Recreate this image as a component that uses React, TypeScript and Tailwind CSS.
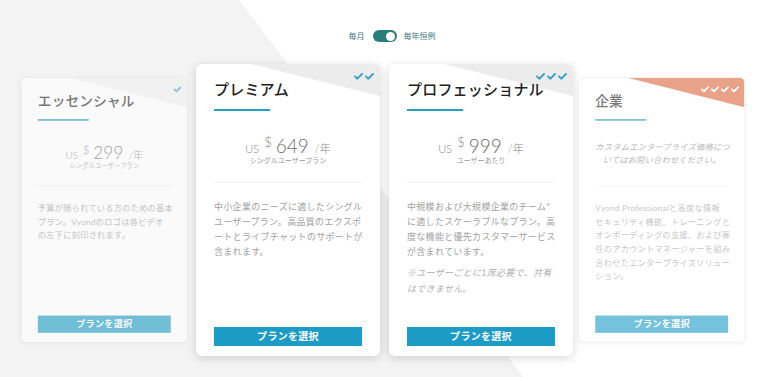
import React from "react";

type Plan = {
  title: string;
  checks: number;
  price?: string;
  unit?: string;
  quote?: string[];
  desc: string[];
  note?: string[];
  muted?: boolean;
  accent?: boolean;
};

const plans: Plan[] = [
  {
    title: "エッセンシャル",
    checks: 1,
    price: "299",
    unit: "シングルユーザープラン",
    desc: ["予算が限られている方のための基本", "プラン。Vyondのロゴは各ビデオ", "の左下に刻印されます。"],
    muted: true,
  },
  {
    title: "プレミアム",
    checks: 2,
    price: "649",
    unit: "シングルユーザープラン",
    desc: [
      "中小企業のニーズに適したシングル",
      "ユーザープラン。高品質のエクスポ",
      "ートとライブチャットのサポートが",
      "含まれます。",
    ],
  },
  {
    title: "プロフェッショナル",
    checks: 3,
    price: "999",
    unit: "ユーザーあたり",
    desc: [
      "中規模および大規模企業のチーム*",
      "に適したスケーラブルなプラン。高",
      "度な機能と優先カスタマーサービス",
      "が含まれています。",
    ],
    note: ["※ユーザーごとに1席必要で、共有", "はできません。"],
  },
  {
    title: "企業",
    checks: 4,
    quote: ["カスタムエンタープライズ価格につ", "いてはお問い合わせください。"],
    desc: [
      "Vyond Professionalと高度な情報",
      "セキュリティ機能、トレーニングと",
      "オンボーディングの支援、および専",
      "任のアカウントマネージャーを組み",
      "合わせたエンタープライズソリュー",
      "ション。",
    ],
    muted: true,
    accent: true,
  },
];

function Check({ color }: { color: string }) {
  return (
    <svg width="9" height="7" viewBox="0 0 9 7" fill="none">
      <path d="M1 3.4 L3.4 5.7 L8 1" stroke={color} strokeWidth="1.9" strokeLinecap="round" strokeLinejoin="round" />
    </svg>
  );
}

function PlanCard({ plan, className }: { plan: Plan; className: string }) {
  return (
    <div
      className={`relative flex flex-col w-[184px] h-[292px] shrink-0 rounded-[6px] bg-white overflow-hidden px-[18px] pb-[10px] ${className}`}
    >
      {/* corner wedge */}
      <div
        className={`absolute top-0 right-0 w-[70%] h-[32px] [clip-path:polygon(0_0,100%_0,100%_100%)] ${
          plan.accent ? "bg-[#db6538]" : plan.muted ? "bg-[#f0f0f0]" : "bg-[#ececec]"
        }`}
      />
      <div className="absolute top-[9px] right-[6px] flex gap-[2px]">
        {Array.from({ length: plan.checks }).map((_, i) => (
          <Check key={i} color={plan.accent ? "#ffffff" : "#3a9fc9"} />
        ))}
      </div>

      <div className="relative pt-[15px] text-[15px] leading-[20px] font-medium text-[#222] tracking-[0.2px] whitespace-nowrap">
        {plan.title}
      </div>
      <div className="mt-[10px] w-[56px] h-[2px] bg-[#2aa0c8]" />

      {plan.price ? (
        <>
          <div className="mt-[26px] h-[18px] flex items-baseline justify-center text-[#888] font-light">
            <span className="text-[11px] leading-[18px]">US</span>
            <span className="ml-[5px] text-[13px] leading-[18px] relative top-[-6px]">$</span>
            <span className="ml-[4px] text-[19px] leading-[18px] text-[#6a6a6a]">{plan.price}</span>
            <span className="ml-[6px] text-[11px] leading-[18px]">/年</span>
          </div>
          <div className="h-[10px] text-[7px] leading-[10px] text-center text-[#999]">{plan.unit}</div>
          <div className="mt-[17px] h-px bg-[#f0f0f0]" />
        </>
      ) : (
        <>
          <div className="mt-[22px] text-[9px] leading-[14px] tracking-[0.3px] italic text-center text-[#8a8a8a]">
            {plan.quote!.map((l) => (
              <div key={l} className="whitespace-nowrap">
                {l}
              </div>
            ))}
          </div>
          <div className="mt-[21px] h-px bg-[#f0f0f0]" />
        </>
      )}

      <div className="mt-[16px] text-[9px] leading-[15px] tracking-[0.3px] text-[#a2a2a2]">
        {plan.desc.map((l) => (
          <div key={l} className="whitespace-nowrap">
            {l}
          </div>
        ))}
      </div>
      {plan.note && (
        <div className="mt-[6px] text-[9px] leading-[16px] tracking-[0.3px] italic text-[#b0b0b0]">
          {plan.note.map((l) => (
            <div key={l} className="whitespace-nowrap">
              {l}
            </div>
          ))}
        </div>
      )}

      <button className="mt-auto h-[19px] w-full bg-[#1b9bc6] text-white text-[10px] font-bold leading-[19px] tracking-[0.3px]">
        プランを選択
      </button>
    </div>
  );
}

export default function App() {
  return (
    <div className="w-[768px] h-[377px] overflow-hidden bg-[linear-gradient(53deg,#f3f3f3_418px,#ffffff_418px)] font-['Lato','Noto_Sans_CJK_JP',sans-serif]">
      {/* billing toggle */}
      <div className="flex items-center pt-[30px] h-[42px]">
        <div className="flex-1 flex justify-end pr-[8px] text-[8px] text-[#3f7a80]">毎月</div>
        <div className="w-[24px] h-[12px] rounded-full bg-[#2b7d79] flex items-center justify-end pr-[1.5px]">
          <div className="w-[9px] h-[9px] rounded-full bg-white" />
        </div>
        <div className="flex-1 pl-[7px] text-[8px] text-[#3f7a80]">毎年恒例</div>
      </div>

      {/* plans */}
      <div className="flex items-center mt-[22px] pl-[4px]">
        <PlanCard plan={plans[0]} className="scale-[0.91] origin-right opacity-60 border border-[#e6e6e6] shadow-[0_1px_4px_rgba(0,0,0,0.06)]" />
        <PlanCard plan={plans[1]} className="ml-[8px] shadow-[0_2px_10px_rgba(0,0,0,0.16)]" />
        <PlanCard plan={plans[2]} className="ml-[9px] shadow-[0_2px_10px_rgba(0,0,0,0.16)]" />
        <PlanCard plan={plans[3]} className="ml-[5px] scale-[0.91] origin-left opacity-60 border border-[#e6e6e6] shadow-[0_1px_4px_rgba(0,0,0,0.06)]" />
      </div>
    </div>
  );
}
